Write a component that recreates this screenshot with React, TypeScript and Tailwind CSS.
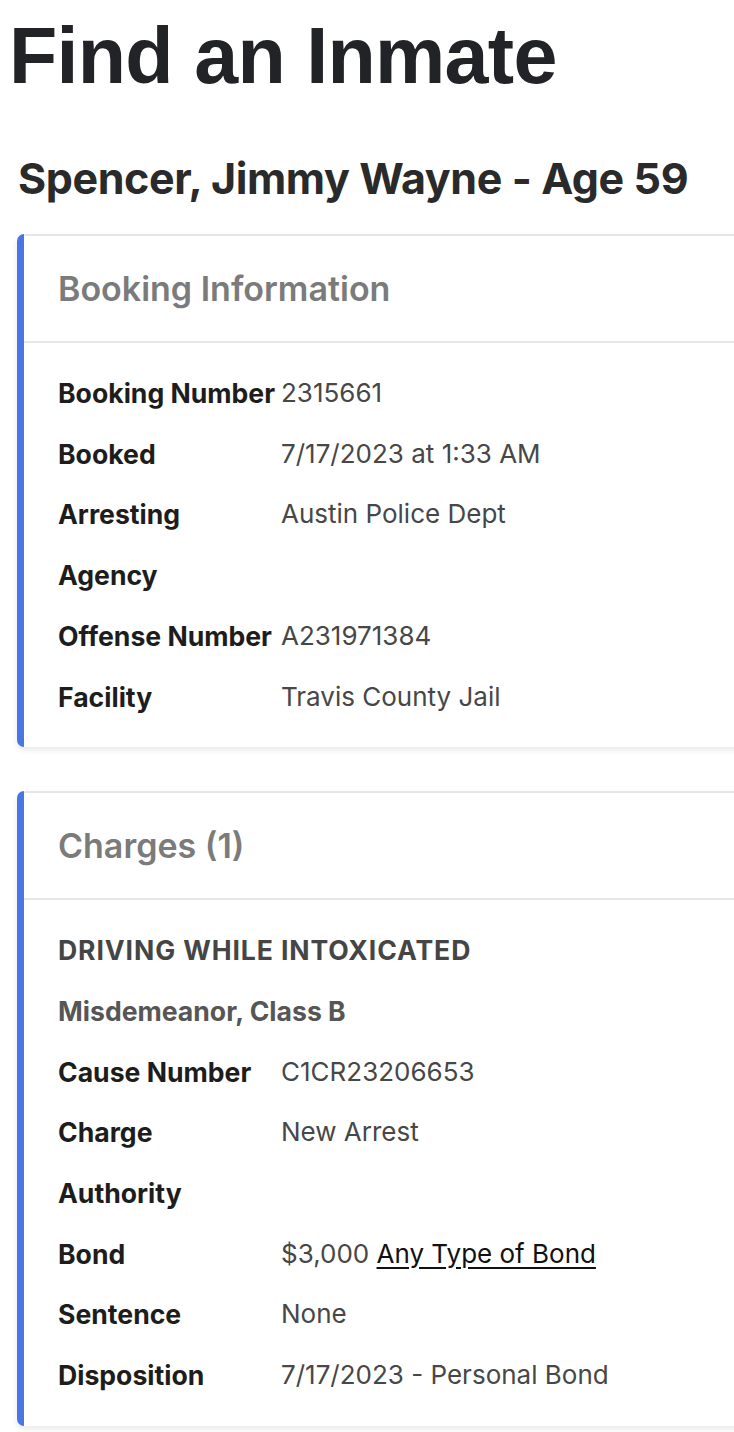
const bookingRows: [string, string][] = [
  ["Booking Number", "2315661"],
  ["Booked", "7/17/2023 at 1:33 AM"],
  ["Arresting Agency", "Austin Police Dept"],
  ["Offense Number", "A231971384"],
  ["Facility", "Travis County Jail"],
];

const Row = ({ label, children }: { label: string; children: React.ReactNode }) => (
  <div className="flex">
    <div className="w-[223px] shrink-0 pr-1 text-[26.6px] font-bold text-[#1d1d1d]">{label}</div>
    <div className="text-[#474747]">{children}</div>
  </div>
);

const Card = ({ title, children }: { title: string; children: React.ReactNode }) => (
  <div className="ml-[17px] mr-[-20px] rounded-l-[7px] border-l-[7px] border-[#4a76e4] bg-white shadow-[0_3px_6px_rgba(0,0,0,0.09)]">
    <div className="border-t-2 border-[#e6e6e6] rounded-tl-[2px]">
      <div className="flex h-[107px] items-center border-b-2 border-[#e6e6e6] pl-[34px]">
        <h3 className="text-[34px] font-semibold text-[#7b7b7b]">{title}</h3>
      </div>
      <div className="pl-[34px] pt-[20px] pb-[20px] text-[26px] leading-[60.7px]">{children}</div>
    </div>
  </div>
);

export default function App() {
  return (
    <div className="min-h-[1432px] w-[734px] overflow-hidden bg-white font-['Inter','Noto_Sans',sans-serif]">
      <h1 className="pl-[9px] pt-[8px] font-['Liberation_Sans',Arial,sans-serif] text-[79px] font-bold leading-[96px] tracking-[-0.7px] text-[#222326]">
        Find an Inmate
      </h1>
      <h2 className="pl-[18px] pt-[46px] text-[43px] font-bold leading-[56px] tracking-[-0.4px] text-[#2a2a2a]">
        Spencer, Jimmy Wayne - Age 59
      </h2>
      <div className="mt-[28px] flex flex-col gap-[44px]">
        <Card title="Booking Information">
          {bookingRows.map(([l, v]) => (
            <Row key={l} label={l}>
              {v}
            </Row>
          ))}
        </Card>
        <Card title="Charges (1)">
          <div className="text-[26.6px] font-bold tracking-[0.9px] text-[#454545]">DRIVING WHILE INTOXICATED</div>
          <div className="text-[26.6px] font-bold text-[#565656]">Misdemeanor, Class B</div>
          <Row label="Cause Number">C1CR23206653</Row>
          <Row label="Charge">New Arrest</Row>
          <Row label="Authority">{""}</Row>
          <Row label="Bond">
            $3,000{" "}
            <a href="#" className="text-[#111] underline underline-offset-[4px]">
              Any Type of Bond
            </a>
          </Row>
          <Row label="Sentence">None</Row>
          <Row label="Disposition">7/17/2023 - Personal Bond</Row>
        </Card>
      </div>
    </div>
  );
}
